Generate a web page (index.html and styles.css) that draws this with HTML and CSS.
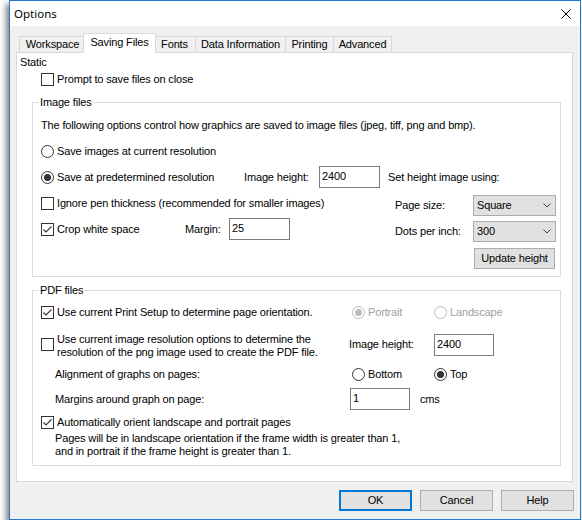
FILE: index.html
```html
<!DOCTYPE html>
<html lang="en">
<head>
    <meta charset="UTF-8">
    <meta name="viewport" content="width=device-width, initial-scale=1.0">
    <title>Options</title>
    <link rel="stylesheet" href="styles.css">
</head>
<body>
<div class="screen">
    <div class="dialog">
        <!-- title bar -->
        <div class="titlebar">
            <span class="title">Options</span>
            <svg class="close" width="10" height="10" viewBox="0 0 10 10"><path d="M0.5 0.5L9.5 9.5M9.5 0.5L0.5 9.5" stroke="#000" stroke-width="1" fill="none"/></svg>
        </div>

        <div class="client">
            <!-- tabs -->
            <div class="tabs">
                <div class="tab t-workspace">Workspace</div>
                <div class="tab t-saving active">Saving Files</div>
                <div class="tab t-fonts">Fonts</div>
                <div class="tab t-data">Data Information</div>
                <div class="tab t-print">Printing</div>
                <div class="tab t-adv">Advanced</div>
            </div>

            <div class="panel">
                <div class="static">Static</div>
                <div class="row prompt-row">
                    <span class="box"></span>Prompt to save files on close
                </div>

                <!-- Image files -->
                <div class="group group-image">
                    <div class="legend">Image files</div>
                    <div class="row r26 first">The following options control how graphics are saved to image files (jpeg, tiff, png and bmp).</div>
                    <div class="row r26"><span class="radio"></span>Save images at current resolution</div>
                    <div class="row r26">
                        <span class="opt w-pre"><span class="radio on"><span class="dot"></span></span>Save at predetermined resolution</span>
                        <span class="lbl w-imgh">Image height:</span>
                        <span class="field w61">2400</span>
                        <span class="after-field">Set height image using:</span>
                    </div>
                    <div class="split">
                        <div class="left-col">
                            <div class="row r26"><span class="box"></span>Ignore pen thickness (recommended for smaller images)</div>
                            <div class="row r26">
                                <span class="opt w-crop"><span class="box"><svg width="11" height="11" viewBox="0 0 11 11"><path d="M1.5 5.5L4 8L9.5 2.5" stroke="#333" stroke-width="1.1" fill="none"/></svg></span>Crop white space</span>
                                <span class="lbl w-margin">Margin:</span>
                                <span class="field w61">25</span>
                            </div>
                        </div>
                        <div class="right-col">
                            <div class="row r21 mt5">
                                <span class="lbl w78">Page size:</span>
                                <span class="combo">Square<svg width="8" height="5" viewBox="0 0 8 5"><path d="M0.5 0.5L4 4L7.5 0.5" stroke="#444" stroke-width="1" fill="none"/></svg></span>
                            </div>
                            <div class="row r21 mt5">
                                <span class="lbl w78">Dots per inch:</span>
                                <span class="combo">300<svg width="8" height="5" viewBox="0 0 8 5"><path d="M0.5 0.5L4 4L7.5 0.5" stroke="#444" stroke-width="1" fill="none"/></svg></span>
                            </div>
                            <div class="row r21 mt6"><span class="btn update">Update height</span></div>
                        </div>
                    </div>
                </div>

                <!-- PDF files -->
                <div class="group group-pdf">
                    <div class="legend">PDF files</div>
                    <div class="row r26 first2">
                        <span class="opt w311"><span class="box"><svg width="11" height="11" viewBox="0 0 11 11"><path d="M1.5 5.5L4 8L9.5 2.5" stroke="#333" stroke-width="1.1" fill="none"/></svg></span>Use current Print Setup to determine page orientation.</span>
                        <span class="opt w82 disabled"><span class="radio on"><span class="dot"></span></span>Portrait</span>
                        <span class="opt disabled"><span class="radio"></span>Landscape</span>
                    </div>
                    <div class="row r39">
                        <span class="opt w308"><span class="box"></span><span class="two-lines">Use current image resolution options to determine the<br>resolution of the png image used to create the PDF file.</span></span>
                        <span class="lbl w85">Image height:</span>
                        <span class="field w60">2400</span>
                    </div>
                    <div class="row r20">
                        <span class="text-in w311">Alignment of graphs on pages:</span>
                        <span class="opt w82"><span class="radio"></span>Bottom</span>
                        <span class="opt"><span class="radio on"><span class="dot"></span></span>Top</span>
                    </div>
                    <div class="row r30">
                        <span class="text-in w309">Margins around graph on page:</span>
                        <span class="field w60">1</span>
                        <span class="units">cms</span>
                    </div>
                    <div class="row r16">
                        <span class="box"><svg width="11" height="11" viewBox="0 0 11 11"><path d="M1.5 5.5L4 8L9.5 2.5" stroke="#333" stroke-width="1.1" fill="none"/></svg></span>Automatically orient landscape and portrait pages
                    </div>
                    <div class="note">Pages will be in landscape orientation if the frame width is greater than 1,<br>and in portrait if the frame height is greater than 1.</div>
                </div>
            </div>

            <!-- dialog buttons -->
            <div class="buttons">
                <span class="btn default">OK</span>
                <span class="btn">Cancel</span>
                <span class="btn">Help</span>
            </div>
        </div>
    </div>
</div>
</body>
</html>
```

FILE: styles.css
```css
* {
    box-sizing: border-box;
}
html, body {
    margin: 0;
    background: #fff;
}
body {
    font-family: "Liberation Sans", Arial, sans-serif;
    font-size: 11px;
    line-height: 13px;
    letter-spacing: -0.15px;
    color: #000;
}
.screen {
    padding-left: 9px;
}
.dialog {
    width: 572px;
    height: 520px;
    border: 1px solid #1f7ad4;
    background: #f0f0f0;
    box-shadow: -3px 4px 6px rgba(0, 0, 0, 0.5);
    display: flex;
    flex-direction: column;
}

/* title bar */
.titlebar {
    height: 25px;
    flex: none;
    background: #fff;
    display: flex;
    align-items: center;
    justify-content: space-between;
    padding: 0 9px 0 4px;
}
.title {
    font-family: "Noto Sans", "Liberation Sans", sans-serif;
    font-size: 11.5px;
    letter-spacing: 0;
}
.close {
    display: block;
}

.client {
    flex: 1;
    padding: 7px 7px 0 6px;
}

/* tabs */
.tabs {
    display: flex;
    align-items: flex-end;
    height: 19px;
    padding-left: 3px;
}
.tab {
    height: 16px;
    border: 1px solid #d9d9d9;
    border-bottom: 0;
    margin-right: -1px;
    background: #f0f0f0;
    text-align: center;
    line-height: 15px;
    white-space: nowrap;
}
.tab.active {
    height: 20px;
    margin: 0 -3px -1px -2px;
    background: #fff;
    position: relative;
    z-index: 1;
    line-height: 17px;
}
.t-workspace { width: 67px; }
.t-saving { width: 73px; }
.t-fonts { width: 43px; }
.t-data { width: 91px; }
.t-print { width: 49px; }
.t-adv { width: 59px; }

.panel {
    height: 430px;
    border: 1px solid #d9d9d9;
    background: #fff;
}
.static {
    margin-top: 3px;
    padding-left: 3px;
}
.row {
    display: flex;
    align-items: center;
    white-space: nowrap;
}
.prompt-row {
    height: 17px;
    margin-top: 2px;
    padding-left: 24px;
}
.r16 { height: 16px; }
.r20 { height: 20px; }
.r21 { height: 21px; }
.r26 { height: 26px; }
.r30 { height: 30px; }
.r39 { height: 39px; }
.mt5 { margin-top: 5px; }
.mt6 { margin-top: 6px; }

/* group boxes */
.group {
    width: 529px;
    margin-left: 15px;
    border: 1px solid #dcdcdc;
    padding: 0 0 7px 8px;
}
.group-image {
    margin-top: 14px;
}
.group-pdf {
    margin-top: 13px;
}
.legend {
    width: max-content;
    margin: -7px 0 0 -2px;
    padding: 0 1px;
    background: #fff;
}
.first {
    margin-top: 3px;
}
.first2 {
    margin-top: 2px;
}

/* checkbox / radio */
.box {
    width: 13px;
    height: 13px;
    flex: none;
    border: 1px solid #333;
    background: #fff;
    margin-right: 3px;
}
.box svg {
    display: block;
}
.radio {
    width: 13px;
    height: 13px;
    flex: none;
    border: 1px solid #333;
    border-radius: 50%;
    background: #fff;
    margin-right: 3px;
    display: flex;
    align-items: center;
    justify-content: center;
}
.radio .dot {
    width: 7px;
    height: 7px;
    border-radius: 50%;
    background: #333;
}
.disabled {
    color: #a0a0a0;
}
.disabled .radio {
    border-color: #bcbcbc;
}
.disabled .radio .dot {
    background: #bcbcbc;
}

.opt {
    display: flex;
    align-items: center;
    flex: none;
}
.lbl {
    flex: none;
}
.w-pre { width: 203px; }
.w-imgh { width: 75px; }
.w-crop { width: 144px; }
.w-margin { width: 44px; }
.w78 { width: 78px; }
.w82 { width: 82px; }
.w85 { width: 85px; }
.w308 { width: 308px; }
.w309 { width: 309px; }
.w311 { width: 311px; }

.field {
    height: 22px;
    flex: none;
    border: 1px solid #7a7a7a;
    background: #fff;
    padding: 0 2px;
    line-height: 18px;
}
.w60 { width: 60px; }
.w61 { width: 61px; }
.after-field {
    margin-left: 8px;
}
.units {
    margin-left: 10px;
}
.text-in {
    flex: none;
    padding-left: 14px;
}
.two-lines {
    padding-top: 3px;
}
.note {
    margin-top: 2px;
    padding-left: 14px;
    white-space: nowrap;
}

.split {
    display: flex;
}
.left-col {
    width: 354px;
}
.combo {
    width: 83px;
    height: 21px;
    border: 1px solid #adadad;
    background: #e1e1e1;
    display: flex;
    align-items: center;
    justify-content: space-between;
    padding: 0 4px 0 3px;
}
.combo svg {
    display: block;
}

/* buttons */
.btn {
    width: 73px;
    height: 21px;
    border: 1px solid #adadad;
    background: #e1e1e1;
    display: flex;
    align-items: center;
    justify-content: center;
}
.btn.update {
    width: 81px;
    margin-left: 79px;
}
.btn.default {
    border: 2px solid #0078d7;
}
.buttons {
    display: flex;
    justify-content: flex-end;
    gap: 8px;
    margin: 8px -1px 0 0;
}
```
